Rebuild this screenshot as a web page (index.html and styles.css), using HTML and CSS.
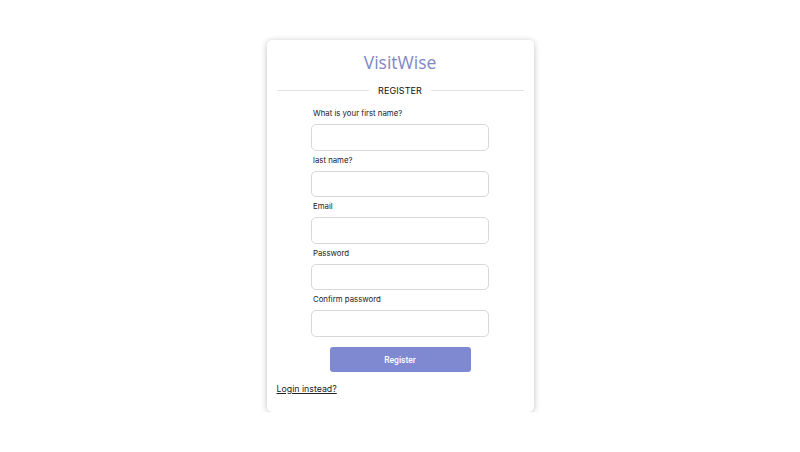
FILE: index.html
```html
<!DOCTYPE html>
<html>
<head>
<meta charset="utf-8">
<link rel="stylesheet" href="styles.css">
</head>
<body>
<div class="card">
  <h1 class="brand">VisitWise</h1>
  <div class="divider"><span class="line"></span><span class="divider-text">REGISTER</span><span class="line"></span></div>
  <form class="form">
    <label class="field"><span class="label">What is your first name?</span><input class="input" type="text"></label>
    <label class="field"><span class="label">last name?</span><input class="input" type="text"></label>
    <label class="field"><span class="label">Email</span><input class="input" type="text"></label>
    <label class="field"><span class="label">Password</span><input class="input" type="password"></label>
    <label class="field"><span class="label">Confirm password</span><input class="input" type="password"></label>
    <button class="btn" type="button">Register</button>
  </form>
  <a class="login" href="#">Login instead?</a>
</div>
</body>
</html>
```
FILE: styles.css
```css
html, body {
  margin: 0;
  padding: 0;
  background: #fff;
  font-family: Inter, "Liberation Sans", sans-serif;
}
body {
  display: flex;
  justify-content: center;
}
.card {
  margin-top: 40px;
  width: 267px;
  box-sizing: border-box;
  padding: 10px 10px 17.5px;
  background: #fff;
  border-radius: 5px;
  box-shadow: 0 1px 6px rgba(0,0,0,0.25);
  display: flex;
  flex-direction: column;
}
.brand {
  margin: 0;
  text-align: center;
  font-family: "Open Sans", sans-serif;
  font-weight: 400;
  font-size: 17.5px;
  line-height: 24px;
  color: #7e87c4;
}
.divider {
  display: flex;
  align-items: center;
  gap: 9px;
  margin-top: 8px;
  height: 16px;
}
.line {
  flex: 1;
  height: 1px;
  background: #e2e2e2;
}
.divider-text {
  font-size: 9px;
  color: #111;
  letter-spacing: 0.1px;
}
.form {
  width: 178px;
  align-self: center;
  display: flex;
  flex-direction: column;
  margin-top: 6px;
}
.field {
  display: flex;
  flex-direction: column;
}
.label {
  font-size: 7.8px;
  line-height: 18px;
  color: #222;
  padding-left: 2px;
}
.input {
  margin: 2px 0 0;
  height: 26.5px;
  box-sizing: border-box;
  border: 1px solid #d8d8d8;
  border-radius: 5px;
  background: #fff;
  padding: 0 8px;
  font: inherit;
}
.btn {
  align-self: center;
  margin-top: 10.5px;
  width: 141px;
  height: 25px;
  border: none;
  border-radius: 3px;
  background: #7f89d1;
  color: #fff;
  font-family: Roboto, sans-serif;
  font-weight: 500;
  font-size: 8.5px;
}
.login {
  margin-top: 9.5px;
  font-size: 8.8px;
  color: #222;
  text-decoration: underline;
  line-height: 13px;
}
```
